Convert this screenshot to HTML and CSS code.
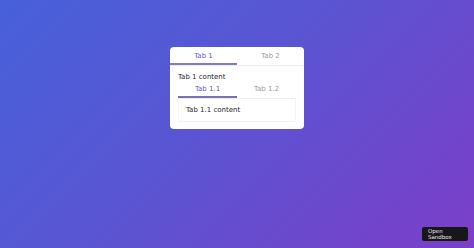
FILE: index.html
```html
<!DOCTYPE html>
<html>
<head>
<meta charset="utf-8">
<link rel="stylesheet" href="styles.css">
</head>
<body>
<div class="stage">
  <div class="card">
    <div class="tabbar">
      <button class="tab active">Tab 1</button>
      <button class="tab">Tab 2</button>
    </div>
    <div class="panel">
      <div class="text">Tab 1 content</div>
      <div class="tabbar inner">
        <button class="tab active">Tab 1.1</button>
        <button class="tab">Tab 1.2</button>
      </div>
      <div class="subpanel">
        <div class="text">Tab 1.1 content</div>
      </div>
    </div>
  </div>
</div>
<a class="sandbox">Open<br>Sandbox</a>
</body>
</html>
```
FILE: styles.css
```css
html, body {
  margin: 0;
  height: 100%;
}
body {
  background: linear-gradient(135deg, #4760da 0%, #5a55d2 45%, #7c3ec9 100%);
  font-family: "DejaVu Sans", Verdana, sans-serif;
  font-size: 7px;
  position: relative;
  overflow: hidden;
}
.stage {
  display: flex;
  justify-content: center;
  padding-top: 47px;
}
.card {
  width: 134px;
  background: #fff;
  border-radius: 4px;
  overflow: hidden;
}
.tabbar {
  display: flex;
  border-bottom: 1px solid #ececec;
}
.tab {
  flex: 1;
  height: 18px;
  border: 0;
  border-bottom: 2px solid transparent;
  background: transparent;
  padding: 2px 0 0 0;
  font: inherit;
  color: #999;
  line-height: 14px;
}
.tab.active {
  color: #6358c4;
  border-bottom-color: #8379cc;
}
.inner .tab {
  height: 16px;
  padding-top: 1px;
  line-height: 13px;
}
.inner .tab.active {
  border-bottom-color: #7a72b0;
}
.panel {
  padding: 6px 8px 7px 8px;
}
.text {
  line-height: 10px;
  color: #1e1e1e;
}
.subpanel {
  padding: 6px 7px 6px 7px;
  border-left: 1px solid #f6f6f6;
  border-right: 1px solid #f5f5f5;
  border-bottom: 1px solid #f3f3f3;
}
.sandbox {
  position: absolute;
  right: 6px;
  bottom: 7px;
  width: 40px;
  padding: 1px 0 1px 6px;
  background: #17171a;
  color: #e8e8e8;
  border-radius: 2px;
  font-size: 5.5px;
  line-height: 6px;
}
```
